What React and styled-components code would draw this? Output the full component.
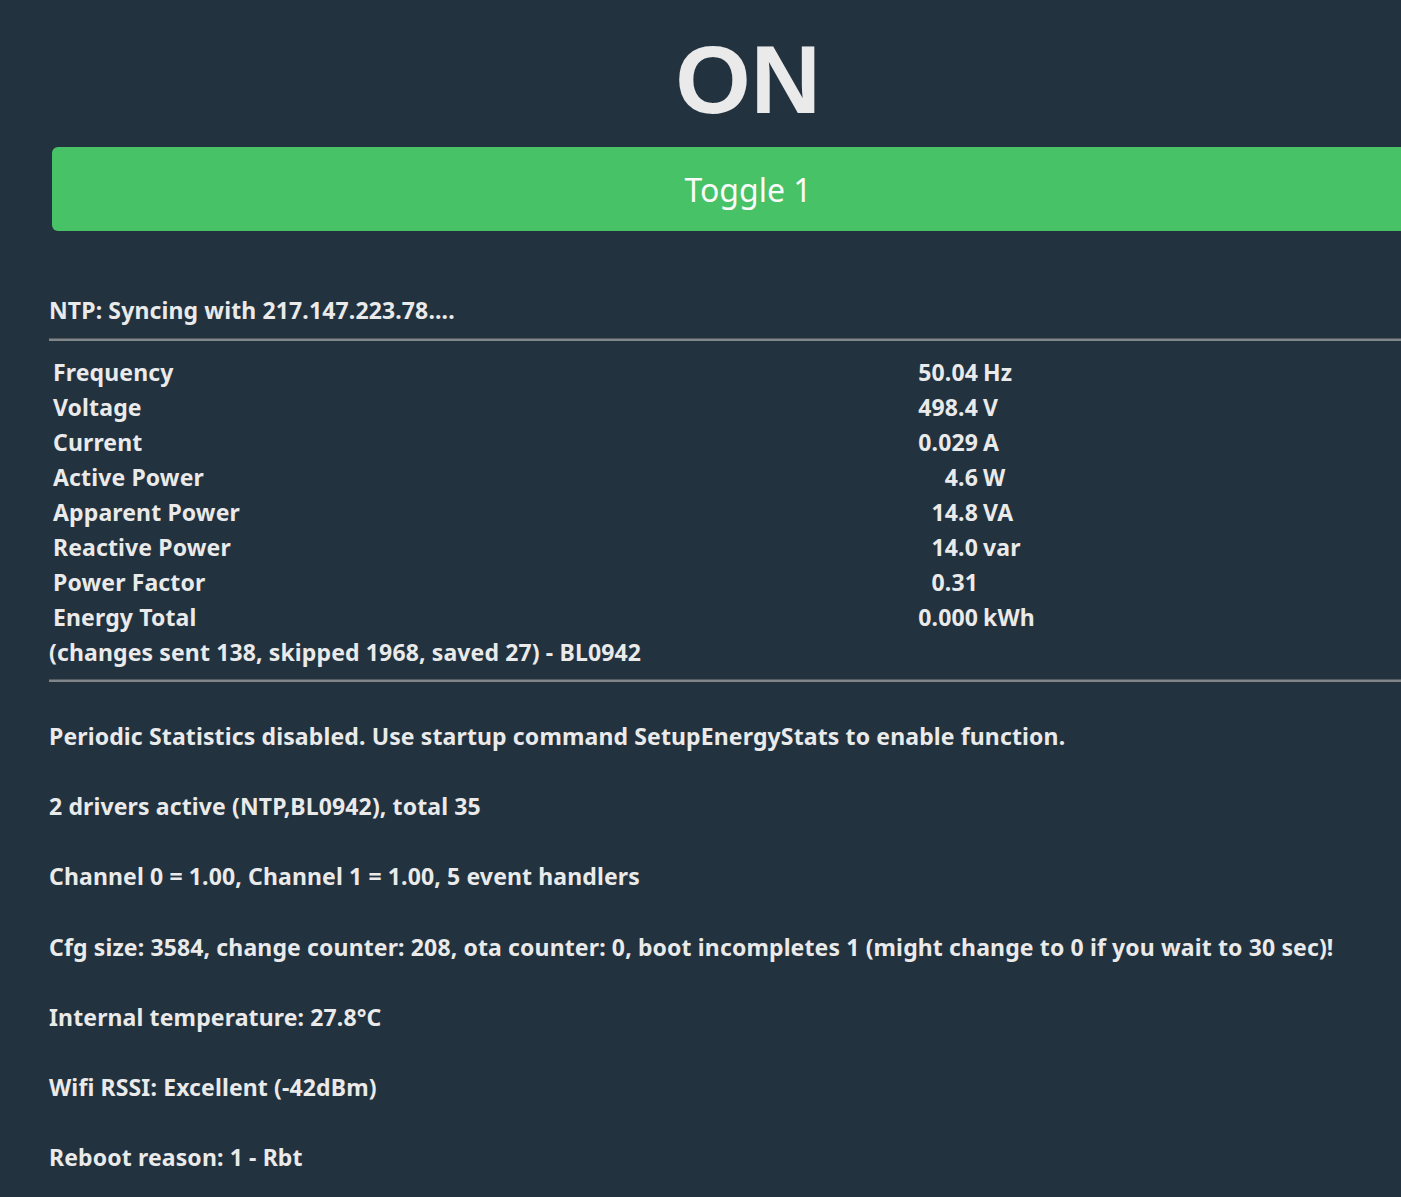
import React from 'react';
import styled, { createGlobalStyle } from 'styled-components';

const GlobalStyle = createGlobalStyle`
  html, body {
    margin: 0;
    padding: 0;
    background: #22323f;
    overflow: hidden;
  }
  body {
    font-family: "Noto Sans", "Open Sans", sans-serif;
    color: #eaeaea;
  }
`;

const Page = styled.div`
  width: 1398px;
  padding-left: 49px;
`;

const Title = styled.div`
  margin-top: 24px;
  font-family: "Liberation Sans", Arial, sans-serif;
  font-weight: bold;
  font-size: 97px;
  line-height: 111px;
  text-align: center;
  color: #eaeaea;
`;

const ToggleButton = styled.button`
  display: block;
  width: 1392px;
  height: 84px;
  margin: 12px 0 0 3px;
  border: 0;
  border-radius: 6px;
  background: #47c266;
  color: #fafafa;
  font-family: "Noto Sans", sans-serif;
  font-size: 32px;
  font-weight: 400;
  cursor: pointer;
`;

const Line = styled.div`
  font-size: 23px;
  font-weight: 700;
  letter-spacing: 0.13px;
  line-height: 35px;
  white-space: nowrap;
`;

const NtpLine = styled(Line)`
  margin-top: 62px;
`;

const Rule = styled.hr`
  margin: ${(p) => p.$before}px 0 ${(p) => p.$after}px;
  height: 0;
  border: 0;
  border-top: 1px solid #555b60;
  border-bottom: 2px solid #80868a;
`;

const Table = styled.div`
  display: grid;
  grid-template-columns: 866px 63px 1fr;
  font-size: 23px;
  font-weight: 700;
  letter-spacing: 0.13px;
`;

const Cell = styled.div`
  height: 35px;
  line-height: 35px;
  white-space: nowrap;
  padding-left: ${(p) => (p.$unit ? 5 : p.$label ? 4 : 0)}px;
  text-align: ${(p) => (p.$value ? 'right' : 'left')};
`;

const Stats = styled.div`
  display: flex;
  flex-direction: column;
  gap: 35.2px;
`;

const readings = [
  ['Frequency', '50.04', 'Hz'],
  ['Voltage', '498.4', 'V'],
  ['Current', '0.029', 'A'],
  ['Active Power', '4.6', 'W'],
  ['Apparent Power', '14.8', 'VA'],
  ['Reactive Power', '14.0', 'var'],
  ['Power Factor', '0.31', ''],
  ['Energy Total', '0.000', 'kWh'],
];

const statLines = [
  'Periodic Statistics disabled. Use startup command SetupEnergyStats to enable function.',
  '2 drivers active (NTP,BL0942), total 35',
  'Channel 0 = 1.00, Channel 1 = 1.00, 5 event handlers',
  'Cfg size: 3584, change counter: 208, ota counter: 0, boot incompletes 1 (might change to 0 if you wait to 30 sec)!',
  'Internal temperature: 27.8°C',
  'Wifi RSSI: Excellent (-42dBm)',
  'Reboot reason: 1 - Rbt',
];

function App() {
  return (
    <>
      <GlobalStyle />
      <Page>
        <Title>ON</Title>
        <ToggleButton type="button">Toggle 1</ToggleButton>

        <NtpLine>NTP: Syncing with 217.147.223.78....</NtpLine>
        <Rule $before={10} $after={14} />

        <Table>
          {readings.map(([label, value, unit]) => (
            <React.Fragment key={label}>
              <Cell $label>{label}</Cell>
              <Cell $value>{value}</Cell>
              <Cell $unit>{unit}</Cell>
            </React.Fragment>
          ))}
        </Table>
        <Line>(changes sent 138, skipped 1968, saved 27) - BL0942</Line>
        <Rule $before={9} $after={37} />

        <Stats>
          {statLines.map((text) => (
            <Line key={text}>{text}</Line>
          ))}
        </Stats>
      </Page>
    </>
  );
}

export default App;
